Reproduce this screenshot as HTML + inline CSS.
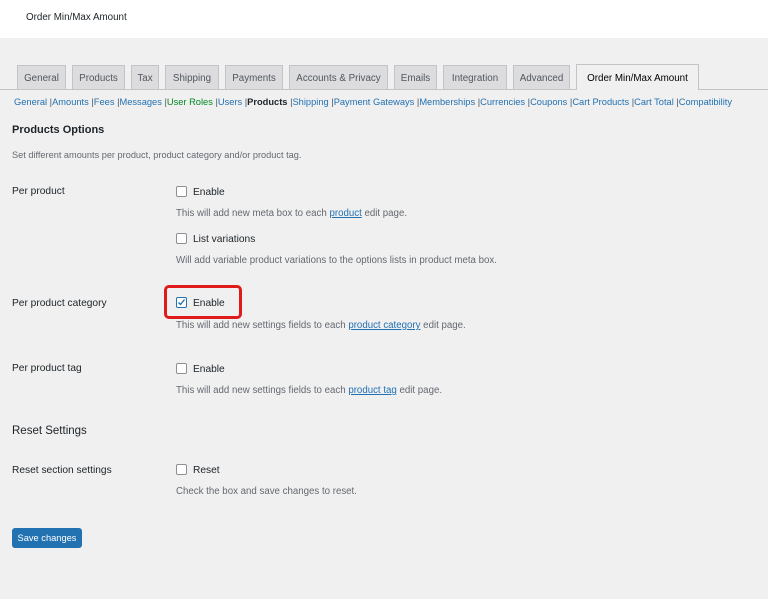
<!DOCTYPE html>
<html><head><meta charset="utf-8"><style>
*{margin:0;padding:0;box-sizing:border-box}
body{width:768px;height:599px;background:#f0f0f1;font-family:"Liberation Sans",sans-serif;color:#3c434a;position:relative;overflow:hidden;font-size:9px}
.a{position:absolute;white-space:nowrap}
.top{position:absolute;left:0;top:0;width:768px;height:38px;background:#fff}
.tab{position:absolute;top:65px;height:24px;background:#dcdcde;border:1px solid #c3c4c7;border-bottom:none;font-size:9.8px;color:#50575e;text-align:center;line-height:25px}
.tab.on{background:#f0f0f1;top:64px;height:26px;color:#000}
.line{position:absolute;left:0;top:89px;width:768px;height:1px;background:#c3c4c7}
.sub{color:#2271b1;font-size:9.3px}
.sub i{font-style:normal;color:#50575e}
.h{font-size:11px;color:#1d2327;font-weight:bold}
.lbl{font-size:10.2px;color:#1d2327}
.cb{position:absolute;width:11px;height:11px;border:1px solid #8c8f94;border-radius:2px;background:#fff}
.d{color:#646970;font-size:9.7px}
a{color:#2271b1;text-decoration:underline}
</style></head><body>
<div class="top"></div>
<div class="a" style="left:26px;top:12px;font-size:9.8px;color:#1d2327">Order Min/Max Amount</div>
<div class="line"></div>
<div class="tab" style="left:17px;width:49px">General</div>
<div class="tab" style="left:72px;width:53px">Products</div>
<div class="tab" style="left:131px;width:28px">Tax</div>
<div class="tab" style="left:165px;width:54px">Shipping</div>
<div class="tab" style="left:225px;width:58px">Payments</div>
<div class="tab" style="left:289px;width:99px">Accounts &amp; Privacy</div>
<div class="tab" style="left:394px;width:43px">Emails</div>
<div class="tab" style="left:443px;width:64px">Integration</div>
<div class="tab" style="left:513px;width:57px">Advanced</div>
<div class="tab on" style="left:576px;width:123px;line-height:27px">Order Min/Max Amount</div>
<div class="a sub" style="left:14px;top:97px">General <i>|</i>Amounts <i>|</i>Fees <i>|</i>Messages <i>|</i><span style="color:#008a20">User Roles</span> <i>|</i>Users <i>|</i><b style="color:#1d2327">Products</b> <i>|</i>Shipping <i>|</i>Payment Gateways <i>|</i>Memberships <i>|</i>Currencies <i>|</i>Coupons <i>|</i>Cart Products <i>|</i>Cart Total <i>|</i>Compatibility</div>
<div class="a h" style="left:12px;top:124px">Products Options</div>
<div class="a d" style="left:12px;top:150px;font-size:9.2px">Set different amounts per product, product category and/or product tag.</div>

<div class="a lbl" style="left:12px;top:186px">Per product</div>
<div class="cb" style="left:176px;top:186px"></div>
<div class="a lbl" style="left:193px;top:187px">Enable</div>
<div class="a d" style="left:176px;top:208px">This will add new meta box to each <a>product</a> edit page.</div>
<div class="cb" style="left:176px;top:233px"></div>
<div class="a lbl" style="left:193px;top:234px">List variations</div>
<div class="a d" style="left:176px;top:255px">Will add variable product variations to the options lists in product meta box.</div>

<div class="a lbl" style="left:12px;top:298px">Per product category</div>
<div class="a" style="left:164px;top:285px;width:78px;height:34px;border:3px solid #e01b1b;border-radius:5px"></div>
<div class="cb" style="left:176px;top:297px;border-color:#2271b1"><svg width="9" height="9" viewBox="0 0 9 9" style="position:absolute;left:0;top:0"><path d="M1.5 4.5l2 2 4-5" fill="none" stroke="#2271b1" stroke-width="1.4"/></svg></div>
<div class="a lbl" style="left:193px;top:298px">Enable</div>
<div class="a d" style="left:176px;top:320px">This will add new settings fields to each <a>product category</a> edit page.</div>

<div class="a lbl" style="left:12px;top:363px">Per product tag</div>
<div class="cb" style="left:176px;top:363px"></div>
<div class="a lbl" style="left:193px;top:364px">Enable</div>
<div class="a d" style="left:176px;top:385px">This will add new settings fields to each <a>product tag</a> edit page.</div>

<div class="a h" style="left:12px;top:425px;font-weight:normal;font-size:11.5px">Reset Settings</div>
<div class="a lbl" style="left:12px;top:465px">Reset section settings</div>
<div class="cb" style="left:176px;top:464px"></div>
<div class="a lbl" style="left:193px;top:465px">Reset</div>
<div class="a d" style="left:176px;top:486px">Check the box and save changes to reset.</div>

<div class="a" style="left:12px;top:528px;width:70px;height:20px;background:#2271b1;border-radius:3px;color:#fff;font-size:9.3px;line-height:20px;text-align:center">Save changes</div>
</body></html>
